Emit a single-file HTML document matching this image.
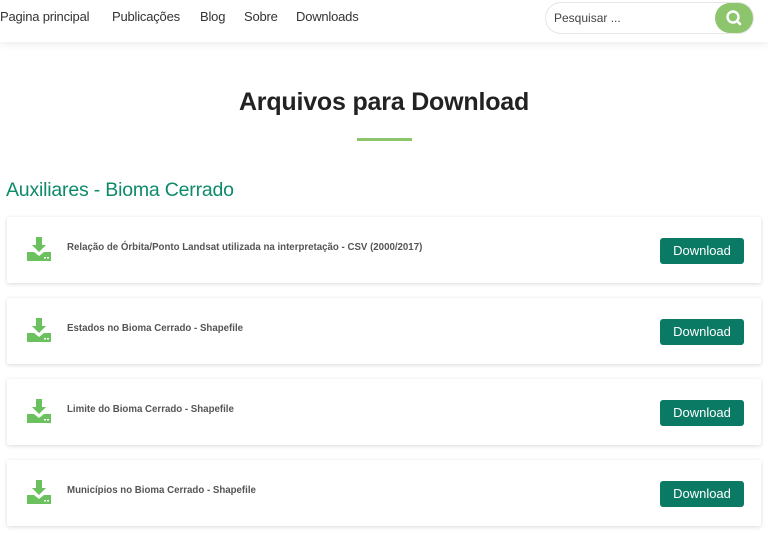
<!DOCTYPE html>
<html><head><meta charset="utf-8"><style>
*{margin:0;padding:0;box-sizing:border-box}
body{width:768px;height:535px;overflow:hidden;background:#fff;font-family:"Liberation Sans",sans-serif;position:relative}
.nav{position:absolute;top:0;left:0;width:768px;height:42px;background:#fff;box-shadow:0 2px 8px rgba(0,0,0,.08)}
.nav a{position:absolute;top:9px;font-size:13px;color:#333;text-decoration:none;letter-spacing:-.2px}
.search{position:absolute;left:545px;top:2px;width:209px;height:32px;border:1px solid #e6e6e6;border-radius:16px;background:#fff}
.search span{position:absolute;left:8px;top:8px;font-size:12px;color:#444}
.sb{position:absolute;right:0;top:0;width:38px;height:30px;border-radius:15px;background:#8cc56b}
h1{position:absolute;top:88px;left:0;width:768px;text-align:center;font-size:25px;font-weight:bold;color:#222;letter-spacing:-.2px}
.line{position:absolute;left:357px;top:138px;width:55px;height:3px;background:#8cc56b}
h2{position:absolute;left:6px;top:179px;font-size:19.5px;font-weight:normal;color:#0d8a6a;letter-spacing:-.2px}
.card{position:absolute;left:7px;width:754px;height:66px;background:#fff;box-shadow:0 1px 4px rgba(0,0,0,.15);border-radius:2px}
.card svg{position:absolute;left:20px;top:20px}
.card .t{position:absolute;left:60px;top:25px;font-size:9.7px;font-weight:bold;color:#555}
.btn{position:absolute;left:653px;top:21px;width:84px;height:26px;background:#0b7a64;border-radius:3px;color:#fff;font-size:13px;text-align:center;line-height:26px}
</style></head><body>
<div class="nav">
<a style="left:0">Pagina principal</a><a style="left:112px">Publicações</a><a style="left:200px">Blog</a><a style="left:244px">Sobre</a><a style="left:296px">Downloads</a>
<div class="search"><span>Pesquisar ...</span><div class="sb"><svg width="38" height="30"><circle cx="18" cy="14" r="5.5" fill="none" stroke="#fff" stroke-width="2.4"/><line x1="22" y1="18" x2="25" y2="21" stroke="#fff" stroke-width="2.6" stroke-linecap="round"/></svg></div></div>
</div>
<h1>Arquivos para Download</h1>
<div class="line"></div>
<h2>Auxiliares - Bioma Cerrado</h2>
<div class="card" style="top:217px"><svg width="24" height="24" viewBox="0 0 24 24"><path d="M9 0h6v8h4l-7 7-7-7h4z" fill="#6cc15f"/><path d="M0 15h7l5 4 5-4h7v9H0z" fill="#6cc15f"/><rect x="17" y="20" width="2" height="1.5" fill="#fff"/><rect x="20" y="20" width="2" height="1.5" fill="#fff"/></svg><div class="t">Relação de Órbita/Ponto Landsat utilizada na interpretação - CSV (2000/2017)</div><div class="btn">Download</div></div>
<div class="card" style="top:298px"><svg width="24" height="24" viewBox="0 0 24 24"><path d="M9 0h6v8h4l-7 7-7-7h4z" fill="#6cc15f"/><path d="M0 15h7l5 4 5-4h7v9H0z" fill="#6cc15f"/><rect x="17" y="20" width="2" height="1.5" fill="#fff"/><rect x="20" y="20" width="2" height="1.5" fill="#fff"/></svg><div class="t">Estados no Bioma Cerrado - Shapefile</div><div class="btn">Download</div></div>
<div class="card" style="top:379px"><svg width="24" height="24" viewBox="0 0 24 24"><path d="M9 0h6v8h4l-7 7-7-7h4z" fill="#6cc15f"/><path d="M0 15h7l5 4 5-4h7v9H0z" fill="#6cc15f"/><rect x="17" y="20" width="2" height="1.5" fill="#fff"/><rect x="20" y="20" width="2" height="1.5" fill="#fff"/></svg><div class="t">Limite do Bioma Cerrado - Shapefile</div><div class="btn">Download</div></div>
<div class="card" style="top:460px"><svg width="24" height="24" viewBox="0 0 24 24"><path d="M9 0h6v8h4l-7 7-7-7h4z" fill="#6cc15f"/><path d="M0 15h7l5 4 5-4h7v9H0z" fill="#6cc15f"/><rect x="17" y="20" width="2" height="1.5" fill="#fff"/><rect x="20" y="20" width="2" height="1.5" fill="#fff"/></svg><div class="t">Municípios no Bioma Cerrado - Shapefile</div><div class="btn">Download</div></div>
</body></html>
